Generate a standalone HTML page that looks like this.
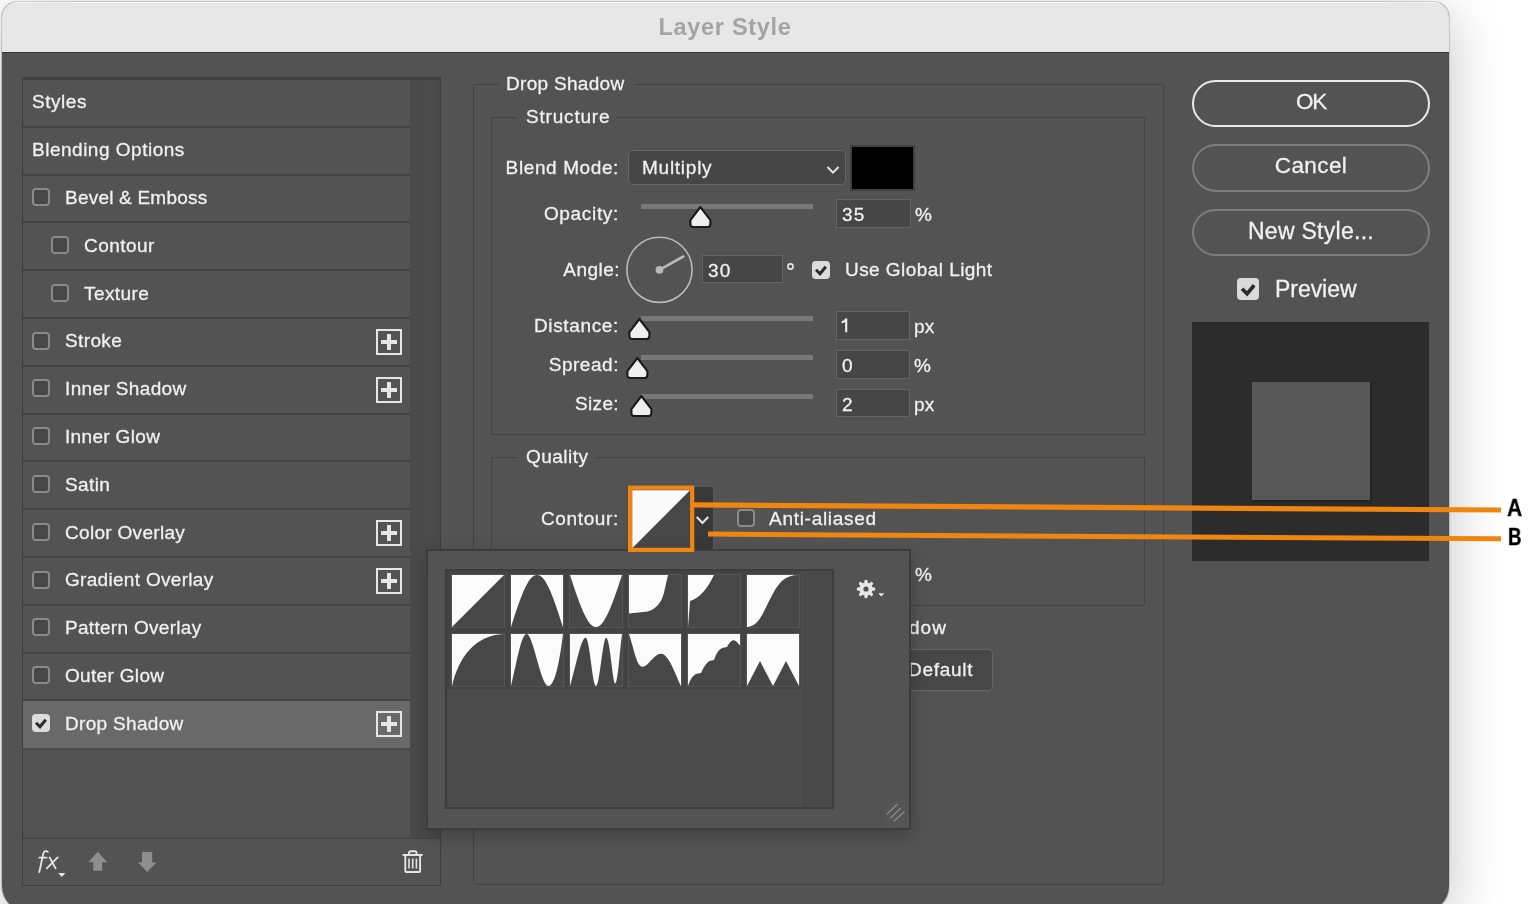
<!DOCTYPE html><html><head><meta charset="utf-8"><style>
html,body{margin:0;padding:0;width:1536px;height:904px;overflow:hidden;background:#ffffff}
body{position:relative;font-family:"Liberation Sans",sans-serif}
.a{position:absolute;box-sizing:content-box}
.t{position:absolute;white-space:nowrap;font-family:"Liberation Sans",sans-serif;will-change:transform;-webkit-text-stroke:0.3px currentColor}
</style></head><body>
<div class="a" style="left:2px;top:2px;width:1446.5px;height:910px;background:#535353;border-radius:15px 15px 26px 26px;box-shadow:0 0 0 1px rgba(0,0,0,0.16),0 12px 55px rgba(0,0,0,0.24);overflow:hidden"><div class="a" style="left:0;top:0;width:1448px;height:49.8px;background:#e7e7e7;border-bottom:1.6px solid #393939;box-shadow:inset 0 1px 0 #f6f6f6"></div></div>
<div class="t" style="left:425.20px;width:600px;text-align:center;top:15.50px;font-size:23.5px;line-height:23.5px;color:#a4a4a4;font-weight:bold;letter-spacing:0.7px;-webkit-text-stroke:0;">Layer Style</div>
<div class="a" style="left:21.5px;top:77px;width:419.5px;height:808.5px;background:#535353;border:1.6px solid #3f3f3f;border-top:3px solid #404040;box-sizing:border-box"></div>
<div class="a" style="left:410px;top:80px;width:30px;height:757px;background:linear-gradient(90deg,#4a4a4a,#4b4b4b 60%,#484848)"></div>
<div class="t" style="left:31.70px;top:92.31px;font-size:19.0px;line-height:19.0px;color:#f0f0f0;font-weight:normal;letter-spacing:0.54375px;">Styles</div>
<div class="a" style="left:23px;top:126px;width:387px;height:2px;background:#444444"></div>
<div class="t" style="left:31.60px;top:140.11px;font-size:19.0px;line-height:19.0px;color:#f0f0f0;font-weight:normal;letter-spacing:0.5072916666666667px;">Blending Options</div>
<div class="a" style="left:23px;top:174px;width:387px;height:2px;background:#444444"></div>
<div class="a" style="left:32.0px;top:188.2px;width:14px;height:14px;background:#474747;border:2px solid #8a8a8a;border-radius:4px;"></div>
<div class="t" style="left:65.10px;top:187.91px;font-size:19.0px;line-height:19.0px;color:#f0f0f0;font-weight:normal;letter-spacing:0.21370192307692315px;">Bevel &amp; Emboss</div>
<div class="a" style="left:23px;top:221px;width:387px;height:2px;background:#444444"></div>
<div class="a" style="left:50.5px;top:236.0px;width:14px;height:14px;background:#474747;border:2px solid #8a8a8a;border-radius:4px;"></div>
<div class="t" style="left:84.00px;top:235.71px;font-size:19.0px;line-height:19.0px;color:#f0f0f0;font-weight:normal;letter-spacing:0.4711458333333334px;">Contour</div>
<div class="a" style="left:23px;top:269px;width:387px;height:2px;background:#444444"></div>
<div class="a" style="left:50.5px;top:283.8px;width:14px;height:14px;background:#474747;border:2px solid #8a8a8a;border-radius:4px;"></div>
<div class="t" style="left:84.00px;top:283.51px;font-size:19.0px;line-height:19.0px;color:#f0f0f0;font-weight:normal;letter-spacing:0.416875px;">Texture</div>
<div class="a" style="left:23px;top:317px;width:387px;height:2px;background:#444444"></div>
<div class="a" style="left:32.0px;top:331.6px;width:14px;height:14px;background:#474747;border:2px solid #8a8a8a;border-radius:4px;"></div>
<div class="t" style="left:65.10px;top:331.31px;font-size:19.0px;line-height:19.0px;color:#f0f0f0;font-weight:normal;letter-spacing:0.378125px;">Stroke</div>
<div class="a" style="left:376px;top:329px;width:22px;height:22px;border:2px solid #e6e6e6"><div class="a" style="left:3.2px;top:9.2px;width:15.6px;height:3.6px;background:#e6e6e6"></div><div class="a" style="left:9.2px;top:3.2px;width:3.6px;height:15.6px;background:#e6e6e6"></div></div>
<div class="a" style="left:23px;top:365px;width:387px;height:2px;background:#444444"></div>
<div class="a" style="left:32.0px;top:379.4px;width:14px;height:14px;background:#474747;border:2px solid #8a8a8a;border-radius:4px;"></div>
<div class="t" style="left:65.10px;top:379.11px;font-size:19.0px;line-height:19.0px;color:#f0f0f0;font-weight:normal;letter-spacing:0.3610795454545454px;">Inner Shadow</div>
<div class="a" style="left:376px;top:377px;width:22px;height:22px;border:2px solid #e6e6e6"><div class="a" style="left:3.2px;top:9.2px;width:15.6px;height:3.6px;background:#e6e6e6"></div><div class="a" style="left:9.2px;top:3.2px;width:3.6px;height:15.6px;background:#e6e6e6"></div></div>
<div class="a" style="left:23px;top:413px;width:387px;height:2px;background:#444444"></div>
<div class="a" style="left:32.0px;top:427.2px;width:14px;height:14px;background:#474747;border:2px solid #8a8a8a;border-radius:4px;"></div>
<div class="t" style="left:65.10px;top:426.91px;font-size:19.0px;line-height:19.0px;color:#f0f0f0;font-weight:normal;letter-spacing:0.3381944444444444px;">Inner Glow</div>
<div class="a" style="left:23px;top:460px;width:387px;height:2px;background:#444444"></div>
<div class="a" style="left:32.0px;top:475.0px;width:14px;height:14px;background:#474747;border:2px solid #8a8a8a;border-radius:4px;"></div>
<div class="t" style="left:65.10px;top:474.71px;font-size:19.0px;line-height:19.0px;color:#f0f0f0;font-weight:normal;letter-spacing:0.3703125px;">Satin</div>
<div class="a" style="left:23px;top:508px;width:387px;height:2px;background:#444444"></div>
<div class="a" style="left:32.0px;top:522.8px;width:14px;height:14px;background:#474747;border:2px solid #8a8a8a;border-radius:4px;"></div>
<div class="t" style="left:65.10px;top:522.51px;font-size:19.0px;line-height:19.0px;color:#f0f0f0;font-weight:normal;letter-spacing:0.30911458333333336px;">Color Overlay</div>
<div class="a" style="left:376px;top:520px;width:22px;height:22px;border:2px solid #e6e6e6"><div class="a" style="left:3.2px;top:9.2px;width:15.6px;height:3.6px;background:#e6e6e6"></div><div class="a" style="left:9.2px;top:3.2px;width:3.6px;height:15.6px;background:#e6e6e6"></div></div>
<div class="a" style="left:23px;top:556px;width:387px;height:2px;background:#444444"></div>
<div class="a" style="left:32.0px;top:570.6px;width:14px;height:14px;background:#474747;border:2px solid #8a8a8a;border-radius:4px;"></div>
<div class="t" style="left:65.10px;top:570.31px;font-size:19.0px;line-height:19.0px;color:#f0f0f0;font-weight:normal;letter-spacing:0.30312500000000003px;">Gradient Overlay</div>
<div class="a" style="left:376px;top:568px;width:22px;height:22px;border:2px solid #e6e6e6"><div class="a" style="left:3.2px;top:9.2px;width:15.6px;height:3.6px;background:#e6e6e6"></div><div class="a" style="left:9.2px;top:3.2px;width:3.6px;height:15.6px;background:#e6e6e6"></div></div>
<div class="a" style="left:23px;top:604px;width:387px;height:2px;background:#444444"></div>
<div class="a" style="left:32.0px;top:618.4px;width:14px;height:14px;background:#474747;border:2px solid #8a8a8a;border-radius:4px;"></div>
<div class="t" style="left:65.10px;top:618.11px;font-size:19.0px;line-height:19.0px;color:#f0f0f0;font-weight:normal;letter-spacing:0.2966517857142857px;">Pattern Overlay</div>
<div class="a" style="left:23px;top:652px;width:387px;height:2px;background:#444444"></div>
<div class="a" style="left:32.0px;top:666.2px;width:14px;height:14px;background:#474747;border:2px solid #8a8a8a;border-radius:4px;"></div>
<div class="t" style="left:65.10px;top:665.91px;font-size:19.0px;line-height:19.0px;color:#f0f0f0;font-weight:normal;letter-spacing:0.3225px;">Outer Glow</div>
<div class="a" style="left:23px;top:701px;width:387px;height:47px;background:#696969"></div>
<div class="a" style="left:23px;top:699px;width:387px;height:2px;background:#444444"></div>
<div class="a" style="left:32.0px;top:714.0px;width:18px;height:18px;background:#dcdcdc;border-radius:4px;"><svg width="18" height="18" viewBox="0 0 18 18" style="position:absolute;left:0;top:0"><path d="M4.0 8.8 L8.0 12.8 L13.8 5.8" fill="none" stroke="#2b2b2b" stroke-width="3.0" stroke-linecap="butt" stroke-linejoin="miter"/></svg></div>
<div class="t" style="left:65.10px;top:713.71px;font-size:19.0px;line-height:19.0px;color:#f0f0f0;font-weight:normal;letter-spacing:0.31625px;">Drop Shadow</div>
<div class="a" style="left:376px;top:711px;width:22px;height:22px;border:2px solid #e6e6e6"><div class="a" style="left:3.2px;top:9.2px;width:15.6px;height:3.6px;background:#e6e6e6"></div><div class="a" style="left:9.2px;top:3.2px;width:3.6px;height:15.6px;background:#e6e6e6"></div></div>
<div class="a" style="left:23px;top:748px;width:387px;height:2px;background:#4a4a4a"></div>
<div class="a" style="left:23px;top:837px;width:417px;height:1.5px;background:#474747"></div>
<div class="a" style="left:472.7px;top:83.5px;width:691.3px;height:801.8px;border:1.6px solid #434343;border-radius:2px;box-sizing:border-box"></div>
<div class="a" style="left:498.5px;top:81.5px;width:135.5px;height:5px;background:#535353"></div>
<div class="t" style="left:506.20px;top:73.81px;font-size:19.0px;line-height:19.0px;color:#f0f0f0;font-weight:normal;letter-spacing:0.30624999999999997px;">Drop Shadow</div>
<div class="a" style="left:490.8px;top:116.7px;width:654.2px;height:318.6px;border:1.6px solid #434343;border-radius:2px;box-sizing:border-box"></div>
<div class="a" style="left:517px;top:114.7px;width:99px;height:5px;background:#535353"></div>
<div class="t" style="left:525.60px;top:107.21px;font-size:19.0px;line-height:19.0px;color:#f0f0f0;font-weight:normal;letter-spacing:0.8078125px;">Structure</div>
<div class="a" style="left:490.9px;top:456.7px;width:654.3000000000001px;height:149.50000000000006px;border:1.6px solid #434343;border-radius:2px;box-sizing:border-box"></div>
<div class="a" style="left:517px;top:454.7px;width:79px;height:5px;background:#535353"></div>
<div class="t" style="left:525.80px;top:446.91px;font-size:19.0px;line-height:19.0px;color:#f0f0f0;font-weight:normal;letter-spacing:0.46822916666666664px;">Quality</div>
<div class="t" style="left:19.34px;width:600px;text-align:right;top:158.41px;font-size:19.0px;line-height:19.0px;color:#f0f0f0;font-weight:normal;letter-spacing:0.6109375px;">Blend Mode:</div>
<div class="t" style="left:19.38px;width:600px;text-align:right;top:204.21px;font-size:19.0px;line-height:19.0px;color:#f0f0f0;font-weight:normal;letter-spacing:0.6723214285714286px;">Opacity:</div>
<div class="t" style="left:20.23px;width:600px;text-align:right;top:260.01px;font-size:19.0px;line-height:19.0px;color:#f0f0f0;font-weight:normal;letter-spacing:0.46875px;">Angle:</div>
<div class="t" style="left:19.38px;width:600px;text-align:right;top:316.21px;font-size:19.0px;line-height:19.0px;color:#f0f0f0;font-weight:normal;letter-spacing:0.651484375px;">Distance:</div>
<div class="t" style="left:19.31px;width:600px;text-align:right;top:355.21px;font-size:19.0px;line-height:19.0px;color:#f0f0f0;font-weight:normal;letter-spacing:0.5359375px;">Spread:</div>
<div class="t" style="left:19.35px;width:600px;text-align:right;top:394.11px;font-size:19.0px;line-height:19.0px;color:#f0f0f0;font-weight:normal;letter-spacing:0.3546875px;">Size:</div>
<div class="t" style="left:19.15px;width:600px;text-align:right;top:509.31px;font-size:19.0px;line-height:19.0px;color:#f0f0f0;font-weight:normal;letter-spacing:0.6491071428571429px;">Contour:</div>
<div class="a" style="left:628.3px;top:150.3px;width:218px;height:34.7px;background:#464646;border:1.8px solid #676767;border-radius:5px;box-sizing:border-box"></div>
<div class="t" style="left:641.60px;top:157.81px;font-size:19.0px;line-height:19.0px;color:#f0f0f0;font-weight:normal;letter-spacing:0.744375px;">Multiply</div>
<svg class="a" style="left:826px;top:165px" width="14" height="10" viewBox="0 0 14 10"><path d="M1.5 2 L7 7.6 L12.5 2" fill="none" stroke="#e4e4e4" stroke-width="2"/></svg>
<div class="a" style="left:850px;top:145px;width:65px;height:45.5px;background:#000;border:2px solid #3f3f3f;box-sizing:border-box"></div>
<div class="a" style="left:641px;top:203.5px;width:171.5px;height:5px;background:#787878"></div>
<svg class="a" style="left:687.8px;top:205px" width="25" height="24" viewBox="0 0 25 24"><path d="M12.4 2 L22.4 15.2 L22.4 19 Q22.4 22 19.4 22 L5.4 22 Q2.4 22 2.4 19 L2.4 15.2 Z" fill="#efefef" stroke="#1a1a1a" stroke-width="2.1" stroke-linejoin="round"/></svg>
<div class="a" style="left:836.0px;top:199.2px;width:75.0px;height:29.3px;background:#464646;border:1.8px solid #646464;box-sizing:border-box"></div>
<div class="t" style="left:842.30px;top:204.91px;font-size:19.0px;line-height:19.0px;color:#f0f0f0;font-weight:normal;letter-spacing:1.209375px;">35</div>
<div class="t" style="left:914.80px;top:204.91px;font-size:19px;line-height:19px;color:#f0f0f0;font-weight:normal;letter-spacing:0.1px;">%</div>
<svg class="a" style="left:620px;top:230px" width="80" height="80" viewBox="0 0 80 80"><circle cx="39.5" cy="39.8" r="32.6" fill="none" stroke="#b9b9b9" stroke-width="1.6"/><circle cx="39.5" cy="39.8" r="3.9" fill="#b9b9b9"/><path d="M39.5 39.8 L63.3 26.5" stroke="#b9b9b9" stroke-width="2.6" stroke-linecap="round"/></svg>
<div class="a" style="left:701.6px;top:255.1px;width:81.2px;height:28.3px;background:#464646;border:1.8px solid #646464;box-sizing:border-box"></div>
<div class="t" style="left:707.90px;top:260.61px;font-size:19.0px;line-height:19.0px;color:#f0f0f0;font-weight:normal;letter-spacing:1.209375px;">30</div>
<svg class="a" style="left:785px;top:262px" width="11" height="9" viewBox="0 0 11 9"><circle cx="5.5" cy="4.5" r="2.6" fill="none" stroke="#e8e8e8" stroke-width="1.6"/></svg>
<div class="a" style="left:812px;top:261px;width:18px;height:18px;background:#dcdcdc;border-radius:4px;"><svg width="18" height="18" viewBox="0 0 18 18" style="position:absolute;left:0;top:0"><path d="M4.0 8.8 L8.0 12.8 L13.8 5.8" fill="none" stroke="#2b2b2b" stroke-width="3.0" stroke-linecap="butt" stroke-linejoin="miter"/></svg></div>
<div class="t" style="left:844.60px;top:260.21px;font-size:19.0px;line-height:19.0px;color:#f0f0f0;font-weight:normal;letter-spacing:0.44375000000000003px;">Use Global Light</div>
<div class="a" style="left:641px;top:316px;width:171.5px;height:5px;background:#787878"></div>
<svg class="a" style="left:627.3px;top:316.7px" width="25" height="24" viewBox="0 0 25 24"><path d="M12.4 2 L22.4 15.2 L22.4 19 Q22.4 22 19.4 22 L5.4 22 Q2.4 22 2.4 19 L2.4 15.2 Z" fill="#efefef" stroke="#1a1a1a" stroke-width="2.1" stroke-linejoin="round"/></svg>
<div class="a" style="left:835.9px;top:311.4px;width:74.5px;height:28.4px;background:#464646;border:1.8px solid #646464;box-sizing:border-box"></div>
<svg class="a" style="left:835.4px;top:316.3px" width="20" height="20" viewBox="0 0 20 20"><path d="M11.2 2.6 L11.2 16.3 M11.2 2.9 Q9.8 5.6 6.6 6.6" fill="none" stroke="#f0f0f0" stroke-width="2.1" stroke-linejoin="round"/></svg>
<div class="t" style="left:914.20px;top:317.01px;font-size:19px;line-height:19px;color:#f0f0f0;font-weight:normal;letter-spacing:0.1px;">px</div>
<div class="a" style="left:641px;top:355.3px;width:171.5px;height:5px;background:#787878"></div>
<svg class="a" style="left:625.3px;top:355.5px" width="25" height="24" viewBox="0 0 25 24"><path d="M12.4 2 L22.4 15.2 L22.4 19 Q22.4 22 19.4 22 L5.4 22 Q2.4 22 2.4 19 L2.4 15.2 Z" fill="#efefef" stroke="#1a1a1a" stroke-width="2.1" stroke-linejoin="round"/></svg>
<div class="a" style="left:835.9px;top:350.3px;width:74.5px;height:28.5px;background:#464646;border:1.8px solid #646464;box-sizing:border-box"></div>
<div class="t" style="left:842.20px;top:356.01px;font-size:19.0px;line-height:19.0px;color:#f0f0f0;font-weight:normal;letter-spacing:0.1px;">0</div>
<div class="t" style="left:914.20px;top:356.01px;font-size:19px;line-height:19px;color:#f0f0f0;font-weight:normal;letter-spacing:0.1px;">%</div>
<div class="a" style="left:641px;top:393.6px;width:171.5px;height:5px;background:#787878"></div>
<svg class="a" style="left:629.0px;top:394.4px" width="25" height="24" viewBox="0 0 25 24"><path d="M12.4 2 L22.4 15.2 L22.4 19 Q22.4 22 19.4 22 L5.4 22 Q2.4 22 2.4 19 L2.4 15.2 Z" fill="#efefef" stroke="#1a1a1a" stroke-width="2.1" stroke-linejoin="round"/></svg>
<div class="a" style="left:835.9px;top:389px;width:74.5px;height:28.4px;background:#464646;border:1.8px solid #646464;box-sizing:border-box"></div>
<div class="t" style="left:842.20px;top:394.91px;font-size:19.0px;line-height:19.0px;color:#f0f0f0;font-weight:normal;letter-spacing:0.1px;">2</div>
<div class="t" style="left:914.20px;top:394.91px;font-size:19px;line-height:19px;color:#f0f0f0;font-weight:normal;letter-spacing:0.1px;">px</div>
<div class="t" style="left:915.30px;top:565.41px;font-size:19px;line-height:19px;color:#f0f0f0;font-weight:normal;letter-spacing:0px;">%</div>
<div class="t" style="left:909.20px;top:617.91px;font-size:19.0px;line-height:19.0px;color:#f0f0f0;font-weight:normal;letter-spacing:1.021875px;">dow</div>
<div class="a" style="left:880px;top:649px;width:113px;height:42.3px;background:#474747;border:1.5px solid #666;border-radius:5px;box-sizing:border-box"></div>
<div class="t" style="left:908.20px;top:660.11px;font-size:19.0px;line-height:19.0px;color:#f0f0f0;font-weight:normal;letter-spacing:0.7286458333333334px;">Default</div>
<div class="a" style="left:688px;top:485.6px;width:25.5px;height:64.5px;background:#383838;border:1.2px solid #585858;border-left:none;border-radius:0 4px 4px 0;box-sizing:border-box"></div>
<svg class="a" style="left:695px;top:514px" width="15" height="12" viewBox="0 0 15 12"><path d="M1.8 3 L7.5 9 L13.2 3" fill="none" stroke="#e8e8e8" stroke-width="2"/></svg>
<svg class="a" style="left:628px;top:485.6px" width="66.3" height="66.4" viewBox="0 0 66.3 66.4"><rect x="2.1" y="2.1" width="62.1" height="62.2" fill="#474747"/><path d="M4.2 62.2 L62.1 4.2 L4.2 4.2 Z" fill="#fafafa"/></svg>
<div class="a" style="left:736.7px;top:509.2px;width:14px;height:14px;background:#474747;border:2px solid #8a8a8a;border-radius:4px;"></div>
<div class="t" style="left:769.40px;top:508.81px;font-size:19.0px;line-height:19.0px;color:#f0f0f0;font-weight:normal;letter-spacing:0.7158522727272727px;">Anti-aliased</div>
<div class="a" style="left:1192.4px;top:79.5px;width:237.7px;height:47.5px;border:2.5px solid #ebebeb;border-radius:24px;box-sizing:border-box"></div>
<div class="t" style="left:1011.20px;width:600px;text-align:center;top:91.25px;font-size:22.5px;line-height:22.5px;color:#f0f0f0;font-weight:normal;letter-spacing:-1.2px;">OK</div>
<div class="a" style="left:1192.4px;top:144px;width:237.7px;height:47.5px;border:2px solid #7d7d7d;border-radius:24px;box-sizing:border-box"></div>
<div class="t" style="left:1011.20px;width:600px;text-align:center;top:155.15px;font-size:22.5px;line-height:22.5px;color:#f0f0f0;font-weight:normal;letter-spacing:0.4px;">Cancel</div>
<div class="a" style="left:1192.4px;top:208.5px;width:237.7px;height:47px;border:2px solid #7d7d7d;border-radius:24px;box-sizing:border-box"></div>
<div class="t" style="left:1011.20px;width:600px;text-align:center;top:219.73px;font-size:23px;line-height:23px;color:#f0f0f0;font-weight:normal;letter-spacing:0.28px;">New Style...</div>
<div class="a" style="left:1236.6px;top:278px;width:22.2px;height:22.2px;background:#d9d9d9;border-radius:4px"><svg width="22.2" height="22.2" viewBox="0 0 22 22" style="position:absolute;left:0;top:0"><path d="M5.0 10.6 L10.0 15.6 L17.0 7.2" fill="none" stroke="#2a2a2a" stroke-width="3.6" stroke-linecap="butt" stroke-linejoin="miter"/></svg></div>
<div class="t" style="left:1275.40px;top:278.13px;font-size:23px;line-height:23px;color:#f0f0f0;font-weight:normal;letter-spacing:-0.05px;">Preview</div>
<div class="a" style="left:1192.4px;top:322.3px;width:236.8px;height:238.3px;background:#2c2c2c"></div>
<div class="a" style="left:1252px;top:382px;width:118px;height:118px;background:#575757;box-shadow:1px 1px 2px rgba(0,0,0,0.35)"></div>
<svg class="a" style="left:0;top:840px" width="440" height="45" viewBox="0 840 440 45"><path d="M47.9 851.9 C46.6 850.6 44.0 850.6 43.3 853.6 L39.3 872.0" fill="none" stroke="#e6e6e6" stroke-width="1.8" stroke-linecap="round"/><path d="M39.4 857.7 L46.6 857.7" stroke="#e6e6e6" stroke-width="1.7" stroke-linecap="round"/><path d="M49.6 857.4 L55.6 868.4 M57.7 857.4 L46.8 868.4" stroke="#e6e6e6" stroke-width="1.8" stroke-linecap="round"/><path d="M58.2 873.0 L65.4 873.0 L61.8 877.0 Z" fill="#e8e8e8"/><path d="M97.8 850.2 L108.4 862.2 L102.2 862.2 L102.2 870.8 L93.3 870.8 L93.3 862.2 L87.1 862.2 Z" fill="#8e8e8e"/><path d="M97.8 850.2 L108.4 862.2 L107.4 862.2 L97.8 851.6 L88.1 862.2 L87.1 862.2 Z" fill="#3f3f3f"/><path d="M142.0 850.6 L152.2 850.6 L152.2 861.2 L157.7 861.2 L147.2 872.0 L136.8 861.2 L142.0 861.2 Z" fill="#8e8e8e"/><path d="M142.0 850.6 L152.2 850.6 L152.2 851.8 L142.0 851.8 Z M136.8 861.2 L142.0 861.2 L142.0 862.2 L137.8 862.2 Z M152.2 861.2 L157.7 861.2 L156.7 862.2 L152.2 862.2 Z" fill="#3f3f3f"/></svg>
<svg class="a" style="left:392px;top:842px" width="40" height="40" viewBox="392 842 40 40"><path d="M402.6 855.0 L422.6 855.0 M409.0 855 L409.0 853.2 Q409.0 851.3 411.0 851.3 L414.6 851.3 Q416.6 851.3 416.6 853.2 L416.6 855 M405.3 855 L405.3 870.4 Q405.3 872.0 406.9 872.0 L418.5 872.0 Q420.1 872.0 420.1 870.4 L420.1 855" fill="none" stroke="#e4e4e4" stroke-width="1.9"/><path d="M409.0 858.4 L409.0 868.6 M412.7 858.4 L412.7 868.6 M416.4 858.4 L416.4 868.6" stroke="#e4e4e4" stroke-width="1.6"/></svg>
<div class="a" style="left:426px;top:549px;width:485px;height:281px;background:#535353;border:2px solid #3c3c3c;box-sizing:border-box;box-shadow:0 6px 16px rgba(0,0,0,0.22)"></div>
<div class="a" style="left:445px;top:568.5px;width:388.5px;height:240.5px;background:#4b4b4b;border:2px solid #3d3d3d;box-sizing:border-box"></div>
<div class="a" style="left:800.5px;top:570.5px;width:31px;height:236.5px;background:#494949;border-left:1px solid #505050;box-sizing:border-box"></div>
<div class="a" style="left:447px;top:570.5px;width:353.5px;height:118.5px;background:#434343"></div>
<div class="a" style="left:451.1px;top:574px;width:54px;height:54px;background:#474747;border:1px solid #555555;box-sizing:border-box"></div>
<svg class="a" style="left:452.1px;top:575px" width="52" height="52" viewBox="0 0 1 1" preserveAspectRatio="none"><rect width="1" height="1" fill="#fbfbfb"/><path d="M0,1 L1,0 L1,1 Z" fill="#474747"/></svg>
<div class="a" style="left:510.0px;top:574px;width:54px;height:54px;background:#474747;border:1px solid #555555;box-sizing:border-box"></div>
<svg class="a" style="left:511.0px;top:575px" width="52" height="52" viewBox="0 0 1 1" preserveAspectRatio="none"><rect width="1" height="1" fill="#fbfbfb"/><path d="M0,1 C0.18,0.45 0.32,0 0.5,0 C0.68,0 0.82,0.45 1,1 Z" fill="#474747"/></svg>
<div class="a" style="left:568.9px;top:574px;width:54px;height:54px;background:#474747;border:1px solid #555555;box-sizing:border-box"></div>
<svg class="a" style="left:569.9px;top:575px" width="52" height="52" viewBox="0 0 1 1" preserveAspectRatio="none"><rect width="1" height="1" fill="#fbfbfb"/><path d="M0,0 C0.18,0.55 0.33,1 0.5,1 C0.67,1 0.82,0.55 1,0 L1,1 L0,1 Z" fill="#474747"/></svg>
<div class="a" style="left:627.8px;top:574px;width:54px;height:54px;background:#474747;border:1px solid #555555;box-sizing:border-box"></div>
<svg class="a" style="left:628.8px;top:575px" width="52" height="52" viewBox="0 0 1 1" preserveAspectRatio="none"><rect width="1" height="1" fill="#fbfbfb"/><path d="M0,0.74 L0.36,0.70 C0.5,0.66 0.62,0.55 0.67,0.35 L0.75,0 L1,0 L1,1 L0,1 Z" fill="#474747"/></svg>
<div class="a" style="left:686.7px;top:574px;width:54px;height:54px;background:#474747;border:1px solid #555555;box-sizing:border-box"></div>
<svg class="a" style="left:687.7px;top:575px" width="52" height="52" viewBox="0 0 1 1" preserveAspectRatio="none"><rect width="1" height="1" fill="#fbfbfb"/><path d="M0,1 L0.04,0.5 C0.24,0.43 0.36,0.28 0.5,0 L1,0 L1,1 Z" fill="#474747"/></svg>
<div class="a" style="left:745.6px;top:574px;width:54px;height:54px;background:#474747;border:1px solid #555555;box-sizing:border-box"></div>
<svg class="a" style="left:746.6px;top:575px" width="52" height="52" viewBox="0 0 1 1" preserveAspectRatio="none"><rect width="1" height="1" fill="#fbfbfb"/><path d="M0,1 C0.25,1 0.33,0.65 0.45,0.45 C0.6,0.15 0.72,0 1,0 L1,1 Z" fill="#474747"/></svg>
<div class="a" style="left:451.1px;top:633px;width:54px;height:54px;background:#474747;border:1px solid #555555;box-sizing:border-box"></div>
<svg class="a" style="left:452.1px;top:634px" width="52" height="52" viewBox="0 0 1 1" preserveAspectRatio="none"><rect width="1" height="1" fill="#fbfbfb"/><path d="M0,1 C0.12,0.45 0.45,0.02 1,0 L1,1 Z" fill="#474747"/></svg>
<div class="a" style="left:510.0px;top:633px;width:54px;height:54px;background:#474747;border:1px solid #555555;box-sizing:border-box"></div>
<svg class="a" style="left:511.0px;top:634px" width="52" height="52" viewBox="0 0 1 1" preserveAspectRatio="none"><rect width="1" height="1" fill="#fbfbfb"/><path d="M0,1 C0.12,0.5 0.2,0 0.3,0 C0.43,0 0.57,1 0.72,1 C0.86,1 0.95,0.4 1,0 L1,1 Z" fill="#474747"/></svg>
<div class="a" style="left:568.9px;top:633px;width:54px;height:54px;background:#474747;border:1px solid #555555;box-sizing:border-box"></div>
<svg class="a" style="left:569.9px;top:634px" width="52" height="52" viewBox="0 0 1 1" preserveAspectRatio="none"><rect width="1" height="1" fill="#fbfbfb"/><path d="M0,1 C0.12,0.6 0.21,0.07 0.3,0.07 C0.38,0.07 0.43,1 0.5,1 C0.57,1 0.63,0.07 0.695,0.07 C0.77,0.07 0.82,0.95 0.87,0.95 C0.92,0.95 0.96,0.3 1,0 L1,1 Z" fill="#474747"/></svg>
<div class="a" style="left:627.8px;top:633px;width:54px;height:54px;background:#474747;border:1px solid #555555;box-sizing:border-box"></div>
<svg class="a" style="left:628.8px;top:634px" width="52" height="52" viewBox="0 0 1 1" preserveAspectRatio="none"><rect width="1" height="1" fill="#fbfbfb"/><path d="M0,0 C0.1,0.3 0.15,0.65 0.27,0.63 C0.38,0.61 0.5,0.35 0.63,0.38 C0.78,0.42 0.9,0.8 1,1 L0,1 Z" fill="#474747"/></svg>
<div class="a" style="left:686.7px;top:633px;width:54px;height:54px;background:#474747;border:1px solid #555555;box-sizing:border-box"></div>
<svg class="a" style="left:687.7px;top:634px" width="52" height="52" viewBox="0 0 1 1" preserveAspectRatio="none"><rect width="1" height="1" fill="#fbfbfb"/><path d="M0,1 C0.05,0.85 0.12,0.76 0.2,0.76 L0.25,0.75 C0.32,0.6 0.38,0.52 0.45,0.51 L0.5,0.5 C0.56,0.33 0.62,0.27 0.7,0.26 L0.75,0.25 C0.8,0.15 0.85,0.12 0.88,0.12 C0.92,0.12 0.96,0.18 1,0.22 L1,1 Z" fill="#474747"/></svg>
<div class="a" style="left:745.6px;top:633px;width:54px;height:54px;background:#474747;border:1px solid #555555;box-sizing:border-box"></div>
<svg class="a" style="left:746.6px;top:634px" width="52" height="52" viewBox="0 0 1 1" preserveAspectRatio="none"><rect width="1" height="1" fill="#fbfbfb"/><path d="M0,1 L0.25,0.52 L0.5,1 L0.75,0.52 L1,1 Z" fill="#474747"/></svg>
<svg class="a" style="left:855.9px;top:579.2px" width="20" height="20" viewBox="0 0 20 20"><circle cx="10" cy="10" r="6.6" fill="#e6e6e6"/><line x1="10" y1="10" x2="10.00" y2="2.30" stroke="#e6e6e6" stroke-width="3.3" stroke-linecap="round"/><line x1="10" y1="10" x2="15.44" y2="4.56" stroke="#e6e6e6" stroke-width="3.3" stroke-linecap="round"/><line x1="10" y1="10" x2="17.70" y2="10.00" stroke="#e6e6e6" stroke-width="3.3" stroke-linecap="round"/><line x1="10" y1="10" x2="15.44" y2="15.44" stroke="#e6e6e6" stroke-width="3.3" stroke-linecap="round"/><line x1="10" y1="10" x2="10.00" y2="17.70" stroke="#e6e6e6" stroke-width="3.3" stroke-linecap="round"/><line x1="10" y1="10" x2="4.56" y2="15.44" stroke="#e6e6e6" stroke-width="3.3" stroke-linecap="round"/><line x1="10" y1="10" x2="2.30" y2="10.00" stroke="#e6e6e6" stroke-width="3.3" stroke-linecap="round"/><line x1="10" y1="10" x2="4.56" y2="4.56" stroke="#e6e6e6" stroke-width="3.3" stroke-linecap="round"/><circle cx="10" cy="10" r="2.6" fill="#535353"/></svg>
<svg class="a" style="left:878px;top:592.5px" width="7" height="4" viewBox="0 0 7 4"><path d="M0.2 0.3 L6.4 0.3 L3.3 3.6 Z" fill="#e6e6e6"/></svg>
<div class="a" style="left:886px;top:803px;width:25px;height:27px;background:#555555;border-right:2px solid #3c3c3c;border-bottom:2px solid #3c3c3c;box-sizing:border-box"></div>
<svg class="a" style="left:884px;top:800px" width="24" height="24" viewBox="0 0 24 24"><path d="M3 14 L13 4.5 M6.5 18 L16.5 8.5 M10 21 L20 12" stroke="#8a8a8a" stroke-width="1.3" stroke-linecap="round"/></svg>
<svg class="a" style="left:0;top:0" width="1536" height="904" viewBox="0 0 1536 904"><rect x="630.1" y="487.7" width="62.1" height="62.2" fill="none" stroke="#f0850f" stroke-width="4.2"/><path d="M694 502.3 L1501 507.4 L1501 512.6 L694 507.5 Z" fill="#f0850f"/><path d="M708 531.6 L1501 536.3 L1501 541.3 L708 536.6 Z" fill="#f0850f"/></svg>
<div class="t" style="left:1506.80px;top:495.63px;font-size:24.3px;line-height:24.3px;color:#000;font-weight:bold;letter-spacing:0px;transform:scaleX(0.865);transform-origin:0 0;">A</div>
<div class="t" style="left:1508.40px;top:525.23px;font-size:24.3px;line-height:24.3px;color:#000;font-weight:bold;letter-spacing:0px;transform:scaleX(0.77);transform-origin:0 0;">B</div>
</body></html>
